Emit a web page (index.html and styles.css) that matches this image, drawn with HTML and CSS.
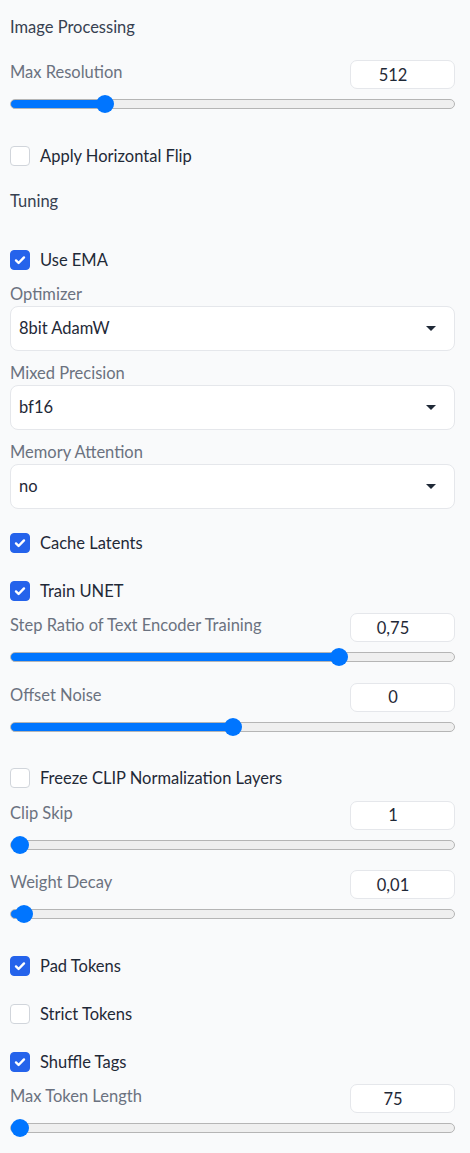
FILE: index.html
```html
<!DOCTYPE html>
<html>
<head>
<meta charset="utf-8">
<title>Settings</title>
<link rel="stylesheet" href="styles.css">
</head>
<body>
<div class="panel">
  <div class="heading">Image Processing</div>

  <div class="slider">
    <div class="slider-head"><span class="label">Max Resolution</span><input class="num" type="text" value="512"></div>
    <input class="range" type="range" min="128" max="2048" step="64" value="512" style="--p:0.2">
  </div>

  <label class="check"><span class="box"></span><span class="ctext">Apply Horizontal Flip</span></label>

  <div class="heading">Tuning</div>

  <label class="check on"><span class="box"><svg viewBox="0 0 16 16"><path d="M4 8.4l2.6 2.6L12 5.4"/></svg></span><span class="ctext">Use EMA</span></label>

  <div class="dropdown">
    <span class="label">Optimizer</span>
    <div class="select"><span>8bit AdamW</span><i class="caret"></i></div>
  </div>
  <div class="dropdown">
    <span class="label">Mixed Precision</span>
    <div class="select"><span>bf16</span><i class="caret"></i></div>
  </div>
  <div class="dropdown">
    <span class="label">Memory Attention</span>
    <div class="select"><span>no</span><i class="caret"></i></div>
  </div>

  <label class="check on"><span class="box"><svg viewBox="0 0 16 16"><path d="M4 8.4l2.6 2.6L12 5.4"/></svg></span><span class="ctext">Cache Latents</span></label>
  <label class="check on"><span class="box"><svg viewBox="0 0 16 16"><path d="M4 8.4l2.6 2.6L12 5.4"/></svg></span><span class="ctext">Train UNET</span></label>

  <div class="slider">
    <div class="slider-head"><span class="label">Step Ratio of Text Encoder Training</span><input class="num" type="text" value="0,75"></div>
    <input class="range" type="range" min="0" max="1" step="0.01" value="0.75" style="--p:0.75">
  </div>
  <div class="slider">
    <div class="slider-head"><span class="label">Offset Noise</span><input class="num" type="text" value="0"></div>
    <input class="range" type="range" min="-1" max="1" step="0.01" value="0" style="--p:0.5">
  </div>

  <label class="check"><span class="box"></span><span class="ctext">Freeze CLIP Normalization Layers</span></label>

  <div class="slider">
    <div class="slider-head"><span class="label">Clip Skip</span><input class="num" type="text" value="1"></div>
    <input class="range" type="range" min="1" max="12" step="1" value="1" style="--p:0">
  </div>
  <div class="slider">
    <div class="slider-head"><span class="label">Weight Decay</span><input class="num" type="text" value="0,01"></div>
    <input class="range" type="range" min="0" max="1" step="0.001" value="0.01" style="--p:0.01">
  </div>

  <label class="check on"><span class="box"><svg viewBox="0 0 16 16"><path d="M4 8.4l2.6 2.6L12 5.4"/></svg></span><span class="ctext">Pad Tokens</span></label>
  <label class="check"><span class="box"></span><span class="ctext">Strict Tokens</span></label>
  <label class="check on"><span class="box"><svg viewBox="0 0 16 16"><path d="M4 8.4l2.6 2.6L12 5.4"/></svg></span><span class="ctext">Shuffle Tags</span></label>

  <div class="slider">
    <div class="slider-head"><span class="label">Max Token Length</span><input class="num" type="text" value="75"></div>
    <input class="range" type="range" min="75" max="300" step="75" value="75" style="--p:0">
  </div>
</div>
</body>
</html>
```
FILE: styles.css
```css
html, body {
  margin: 0;
  padding: 0;
  background: #f9fafb;
}
body {
  font-family: Lato, "Open Sans", sans-serif;
  font-size: 16.5px;
  color: #374151;
}
.panel {
  display: flex;
  flex-direction: column;
  padding: 15px 15px 0 10px;
}

.heading {
  height: 24px;
  line-height: 24px;
  color: #374151;
}

.label {
  color: #6b7280;
  line-height: 24px;
  height: 24px;
}

/* slider */
.slider {
  display: flex;
  flex-direction: column;
}
.slider-head {
  display: flex;
  justify-content: space-between;
  align-items: flex-start;
  height: 29px;
}
.num {
  box-sizing: border-box;
  width: 105px;
  height: 29px;
  border: 1px solid #e5e7eb;
  border-radius: 7px;
  background: #fff;
  text-align: center;
  font: inherit;
  color: #1f2937;
  padding: 0 19px 0 0;
  outline: none;
}
.range {
  -webkit-appearance: none;
  appearance: none;
  display: block;
  width: 100%;
  height: 18px;
  margin: 6px 0 0;
  padding: 0;
  background: transparent;
}
.range::-webkit-slider-runnable-track {
  box-sizing: border-box;
  height: 10px;
  border: 1px solid #b5b5b5;
  border-radius: 5px;
  background: linear-gradient(#0075ff, #0075ff) 0 0 / calc(9px + var(--p) * (100% - 18px)) 100% no-repeat, #efefef;
  background-origin: border-box;
  background-clip: border-box;
}
.range::-webkit-slider-thumb {
  -webkit-appearance: none;
  appearance: none;
  width: 18px;
  height: 18px;
  margin-top: -5px;
  border: none;
  border-radius: 50%;
  background: #0075ff;
}

/* checkbox */
.check {
  display: flex;
  align-items: center;
  height: 32px;
  color: #1f2937;
}
.box {
  box-sizing: border-box;
  width: 20px;
  height: 20px;
  border: 1px solid #d1d5db;
  border-radius: 4px;
  background: #fff;
  margin-right: 10px;
  display: flex;
  align-items: center;
  justify-content: center;
}
.check.on .box {
  background: #2563eb;
  border-color: #2563eb;
}
.box svg {
  width: 16px;
  height: 16px;
  fill: none;
  stroke: #fff;
  stroke-width: 2.4;
  stroke-linecap: round;
  stroke-linejoin: round;
}

/* dropdown */
.dropdown {
  display: flex;
  flex-direction: column;
}
.select {
  box-sizing: border-box;
  height: 45px;
  border: 1px solid #e5e7eb;
  border-radius: 8px;
  background: #fff;
  display: flex;
  align-items: center;
  justify-content: space-between;
  padding: 0 18px 0 8px;
  color: #1f2937;
}
.caret {
  width: 0;
  height: 0;
  border-left: 5px solid transparent;
  border-right: 5px solid transparent;
  border-top: 5px solid #1f2937;
}

/* vertical rhythm */
.heading + .slider { margin-top: 21px; }
.slider + .check { margin-top: 26.5px; }
.check + .heading { margin-top: 17px; }
.heading + .check { margin-top: 31px; }
.check + .dropdown { margin-top: 6px; }
.dropdown + .dropdown { margin-top: 10px; }
.dropdown + .check { margin-top: 18px; }
.check + .check { margin-top: 16px; }
.check + .slider { margin-top: 6.5px; }
.slider + .slider { margin-top: 16.5px; }
```
